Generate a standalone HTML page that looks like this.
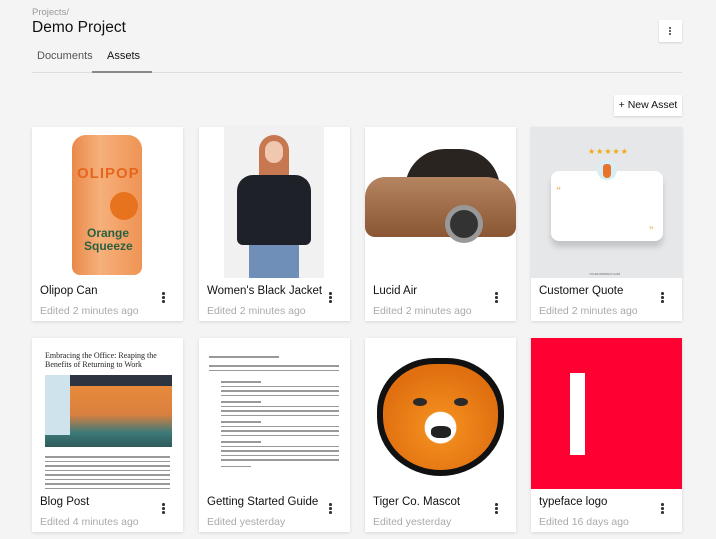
<!DOCTYPE html>
<html><head><meta charset="utf-8"><style>
*{margin:0;padding:0;box-sizing:border-box}
body{width:716px;height:539px;background:#f4f4f4;font-family:"Liberation Sans",sans-serif;position:relative;overflow:hidden;color:#111}
.a{position:absolute}
.card{position:absolute;width:151px;height:194px;background:#fff;box-shadow:0 1px 3px rgba(0,0,0,.12);overflow:hidden}
.img{position:absolute;left:0;top:0;width:151px;height:151px;overflow:hidden;background:#fff}
.t{position:absolute;left:8px;top:158px;font-size:11.5px;color:#111}
.s{position:absolute;left:8px;top:178px;font-size:10.5px;color:#aaa}
.d{position:absolute;left:130px;top:165px;width:3px}
.d i{display:block;width:2.5px;height:2.5px;background:#333;border-radius:50%;margin-bottom:1.5px}
.ln{height:1.5px;background:#999;margin-bottom:3px}
</style></head><body>
<div class="a" style="left:32px;top:7px;font-size:9.5px;color:#999">Projects/</div>
<div class="a" style="left:32px;top:19px;font-size:15.5px;color:#111">Demo Project</div>
<div class="a" style="left:659px;top:20px;width:23px;height:22px;background:#fff;box-shadow:0 1px 2px rgba(0,0,0,.15)"><div class="d" style="left:10px;top:7px"><i style="width:2px;height:2px;margin-bottom:1px"></i><i style="width:2px;height:2px;margin-bottom:1px"></i><i style="width:2px;height:2px"></i></div></div>
<div class="a" style="left:37px;top:50px;font-size:11px;color:#555">Documents</div>
<div class="a" style="left:107px;top:50px;font-size:11px;color:#111">Assets</div>
<div class="a" style="left:32px;top:72px;width:650px;height:1px;background:#ddd"></div>
<div class="a" style="left:92px;top:71px;width:60px;height:2px;background:#888"></div>
<div class="a" style="left:614px;top:95px;width:68px;height:21px;background:#fff;box-shadow:0 1px 2px rgba(0,0,0,.15);font-size:10.5px;line-height:21px;text-align:center">+ New Asset</div>

<!-- row 1 -->
<div class="card" style="left:32px;top:127px"><div class="img">
<div class="a" style="left:40px;top:8px;width:70px;height:140px;background:linear-gradient(90deg,#e9894a,#f6b07a 40%,#ef9455);border-radius:14px 14px 8px 8px"></div>
<div class="a" style="left:45px;top:38px;font-size:15px;font-weight:bold;color:#e5661f;letter-spacing:1px">OLIPOP</div>
<div class="a" style="left:78px;top:65px;width:28px;height:28px;border-radius:50%;background:#e8731f"></div>
<div class="a" style="left:52px;top:100px;font-size:12px;font-weight:bold;color:#2a6040;line-height:13px;text-align:center;width:48px">Orange Squeeze</div>
</div><div class="t">Olipop Can</div><div class="s">Edited 2 minutes ago</div><div class="d"><i></i><i></i><i></i></div></div>

<div class="card" style="left:199px;top:127px"><div class="img">
<div class="a" style="left:25px;top:0;width:100px;height:151px;background:#f1f1f1"></div>
<div class="a" style="left:60px;top:8px;width:30px;height:45px;background:#c87850;border-radius:15px 15px 6px 6px"></div>
<div class="a" style="left:66px;top:14px;width:18px;height:22px;background:#f0c8b0;border-radius:9px"></div>
<div class="a" style="left:38px;top:48px;width:74px;height:70px;background:#1e2128;border-radius:16px 16px 6px 6px"></div>
<div class="a" style="left:50px;top:118px;width:50px;height:33px;background:#6f8fb8"></div>
</div><div class="t">Women's Black Jacket</div><div class="s">Edited 2 minutes ago</div><div class="d"><i></i><i></i><i></i></div></div>

<div class="card" style="left:365px;top:127px"><div class="img">
<div class="a" style="left:40px;top:22px;width:95px;height:40px;background:#2a2420;border-radius:40px 40px 0 0"></div>
<div class="a" style="left:0;top:50px;width:151px;height:60px;background:linear-gradient(180deg,#b58460,#8a5634);border-radius:20px 30px 10px 10px"></div>
<div class="a" style="left:80px;top:78px;width:38px;height:38px;border-radius:50%;background:#333;border:5px solid #999"></div>
</div><div class="t">Lucid Air</div><div class="s">Edited 2 minutes ago</div><div class="d"><i></i><i></i><i></i></div></div>

<div class="card" style="left:531px;top:127px"><div class="img" style="background:#e6e7e9">
<div class="a" style="left:57px;top:20px;font-size:8px;color:#f3a712;letter-spacing:1px">★★★★★</div>
<div class="a" style="left:20px;top:44px;width:112px;height:70px;background:#fff;border-radius:8px;box-shadow:0 6px 6px rgba(0,0,0,.15)"></div>
<div class="a" style="left:66px;top:33px;width:20px;height:20px;border-radius:50%;background:#d8eef5"></div>
<div class="a" style="left:72px;top:37px;width:8px;height:14px;background:#e8732a;border-radius:3px 3px 4px 4px"></div>
<div class="a" style="left:25px;top:58px;font-size:9px;color:#f3c58a">❝</div>
<div class="a" style="left:118px;top:98px;font-size:9px;color:#f3c58a">❞</div>
<div class="a" style="left:58px;top:145px;font-size:3px;color:#666">YOURCOMPANY.COM</div>
</div><div class="t">Customer Quote</div><div class="s">Edited 2 minutes ago</div><div class="d"><i></i><i></i><i></i></div></div>

<!-- row 2 -->
<div class="card" style="left:32px;top:338px"><div class="img">
<div class="a" style="left:13px;top:13px;width:128px;font-family:'Liberation Serif',serif;font-size:8px;line-height:9px;color:#222">Embracing the Office: Reaping the Benefits of Returning to Work</div>
<div class="a" style="left:13px;top:37px;width:127px;height:72px;background:linear-gradient(180deg,#2f3540 0,#2f3540 15%,#e88a3a 15%,#d98040 55%,#3c7a78 80%,#2f5a5a)"></div>
<div class="a" style="left:13px;top:37px;width:25px;height:60px;background:#cfe3ec"></div>
<div class="a" style="left:13px;top:118px;width:125px"><div class="ln"></div><div class="ln"></div><div class="ln"></div><div class="ln"></div><div class="ln"></div><div class="ln"></div><div class="ln"></div><div class="ln"></div></div>
</div><div class="t">Blog Post</div><div class="s">Edited 4 minutes ago</div><div class="d"><i></i><i></i><i></i></div></div>

<div class="card" style="left:199px;top:338px"><div class="img">
<div class="a" style="left:10px;top:18px;width:70px"><div class="ln"></div></div>
<div class="a" style="left:10px;top:27px;width:130px"><div class="ln"></div><div class="ln"></div></div>
<div class="a" style="left:22px;top:43px;width:118px"><div class="ln" style="width:40px"></div><div class="ln"></div><div class="ln"></div><div class="ln"></div><div class="ln" style="margin-top:5px;width:40px"></div><div class="ln"></div><div class="ln"></div><div class="ln"></div><div class="ln" style="margin-top:5px;width:40px"></div><div class="ln"></div><div class="ln"></div><div class="ln"></div><div class="ln" style="margin-top:5px;width:40px"></div><div class="ln"></div><div class="ln"></div><div class="ln"></div><div class="ln"></div><div class="ln" style="margin-top:5px;width:30px"></div></div>
</div><div class="t">Getting Started Guide</div><div class="s">Edited yesterday</div><div class="d"><i></i><i></i><i></i></div></div>

<div class="card" style="left:365px;top:338px"><div class="img">
<div class="a" style="left:12px;top:20px;width:127px;height:118px;background:#111;border-radius:45% 45% 50% 50%"></div>
<div class="a" style="left:18px;top:26px;width:115px;height:106px;background:radial-gradient(circle at 50% 60%,#fff 0,#fff 18%,#f08a1c 19%,#e06f10 70%);border-radius:45% 45% 50% 50%"></div>
<div class="a" style="left:48px;top:60px;width:14px;height:8px;background:#2a2a2a;border-radius:50%"></div>
<div class="a" style="left:89px;top:60px;width:14px;height:8px;background:#2a2a2a;border-radius:50%"></div>
<div class="a" style="left:66px;top:88px;width:20px;height:12px;background:#222;border-radius:40%"></div>
</div><div class="t">Tiger Co. Mascot</div><div class="s">Edited yesterday</div><div class="d"><i></i><i></i><i></i></div></div>

<div class="card" style="left:531px;top:338px"><div class="img" style="background:#ff0033">
<div class="a" style="left:39px;top:35px;width:15px;height:82px;background:#fff"></div>
</div><div class="t">typeface logo</div><div class="s">Edited 16 days ago</div><div class="d"><i></i><i></i><i></i></div></div>
</body></html>
